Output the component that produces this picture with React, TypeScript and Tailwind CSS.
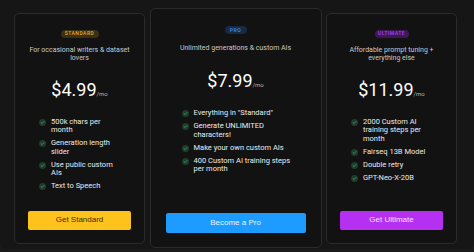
import React from "react";

type Plan = {
  badge: string;
  badgeCls: string;
  desc: string[];
  price: string;
  features: string[];
  button: string;
  buttonCls: string;
  pro?: boolean;
};

const plans: Plan[] = [
  {
    badge: "STANDARD",
    badgeCls: "bg-[#3a3012] text-[#d9a92c] w-[38px]",
    desc: ["For occasional writers & dataset", "lovers"],
    price: "$4.99",
    features: ["500k chars per month", "Generation length slider", "Use public custom AIs", "Text to Speech"],
    button: "Get Standard",
    buttonCls: "bg-[#fdc21c] text-[#3b2e05]",
  },
  {
    badge: "PRO",
    badgeCls: "bg-[#172944] text-[#3d86e8] w-[22px]",
    desc: ["Unlimited generations & custom AIs"],
    price: "$7.99",
    features: ["Everything in \"Standard\"", "Generate UNLIMITED characters!", "Make your own custom AIs", "400 Custom AI training steps per month"],
    button: "Become a Pro",
    buttonCls: "bg-[#1d9bff] text-[#e8f4ff]",
    pro: true,
  },
  {
    badge: "ULTIMATE",
    badgeCls: "bg-[#3a1a55] text-[#a53cf2] w-[34px]",
    desc: ["Affordable prompt tuning +", "everything else"],
    price: "$11.99",
    features: ["2000 Custom AI training steps per month", "Fairseq 13B Model", "Double retry", "GPT-Neo-X-20B"],
    button: "Get Ultimate",
    buttonCls: "bg-[#b630f2] text-[#f5e2ff]",
  },
];

function Check() {
  return (
    <span className="mt-[1px] flex h-[7px] w-[7px] shrink-0 items-center justify-center rounded-full bg-[#1f3d2c]">
      <svg width="5" height="5" viewBox="0 0 10 10" fill="none">
        <path d="M2 5.2 L4.2 7.2 L8 3" stroke="#44a36c" strokeWidth="1.6" strokeLinecap="round" strokeLinejoin="round" />
      </svg>
    </span>
  );
}

function Card({ p }: { p: Plan }) {
  return (
    <div
      className={
        "flex flex-col rounded-[5px] border border-[#2b2b2b] bg-[#121212] " +
        (p.pro ? "h-[240px] w-[172px] px-[15px] pb-[14px]" : "h-[231px] w-[131px] px-[13px] pb-[13px]")
      }
    >
      <div className={(p.pro ? "mt-[17px]" : "mt-[16px]") + " flex justify-center"}>
        <span
          className={
            "flex h-[8px] items-center justify-center rounded-full text-[5px] font-semibold tracking-[0.5px] leading-none " +
            p.badgeCls
          }
        >
          {p.badge}
        </span>
      </div>
      <div
        className={
          (p.pro ? "mt-[10px]" : "mt-[8px]") + " text-center text-[7px] leading-[8px] text-[#cacaca]"
        }
      >
        {p.desc.map((d) => (
          <div key={d}>{d}</div>
        ))}
      </div>
      <div className={(p.pro ? "mt-[20px]" : "mt-[19px]") + " flex items-baseline justify-center"}>
        <span className="text-[18px] leading-[18px] text-white">{p.price}</span>
        <span className="text-[6px] text-[#b5b5b5]">/mo</span>
      </div>
      <ul
        className={
          "mt-[19px] flex flex-col gap-[4.5px] " + (p.pro ? "pl-[16px] pr-[14px]" : "pl-[11px] pr-[8px]")
        }
      >
        {p.features.map((f) => (
          <li key={f} className="flex items-start gap-[5px]">
            <Check />
            <span className="text-[7.5px] leading-[8.5px] font-normal text-[#ececec]">{f}</span>
          </li>
        ))}
      </ul>
      <button
        className={
          "mt-auto flex w-full items-center justify-center rounded-[2px] text-[8px] " +
          (p.pro ? "h-[20px]" : "h-[19px]") +
          " " +
          p.buttonCls
        }
        style={{ fontFamily: '"Liberation Sans", Arial, sans-serif' }}
      >
        {p.button}
      </button>
    </div>
  );
}

export default function App() {
  return (
    <div
      className="h-[252px] w-[474px] overflow-hidden bg-[#1a1a1a]"
      style={{ fontFamily: "Roboto, 'Liberation Sans', sans-serif" }}
    >
      <div className="h-[249px] w-[474px] rounded-b-[6px] bg-[#161616] pt-[8px]">
        <div className="flex h-[240px] items-center gap-[4.5px] pl-[14px]">
          <Card p={plans[0]} />
          <Card p={plans[1]} />
          <Card p={plans[2]} />
        </div>
      </div>
    </div>
  );
}
